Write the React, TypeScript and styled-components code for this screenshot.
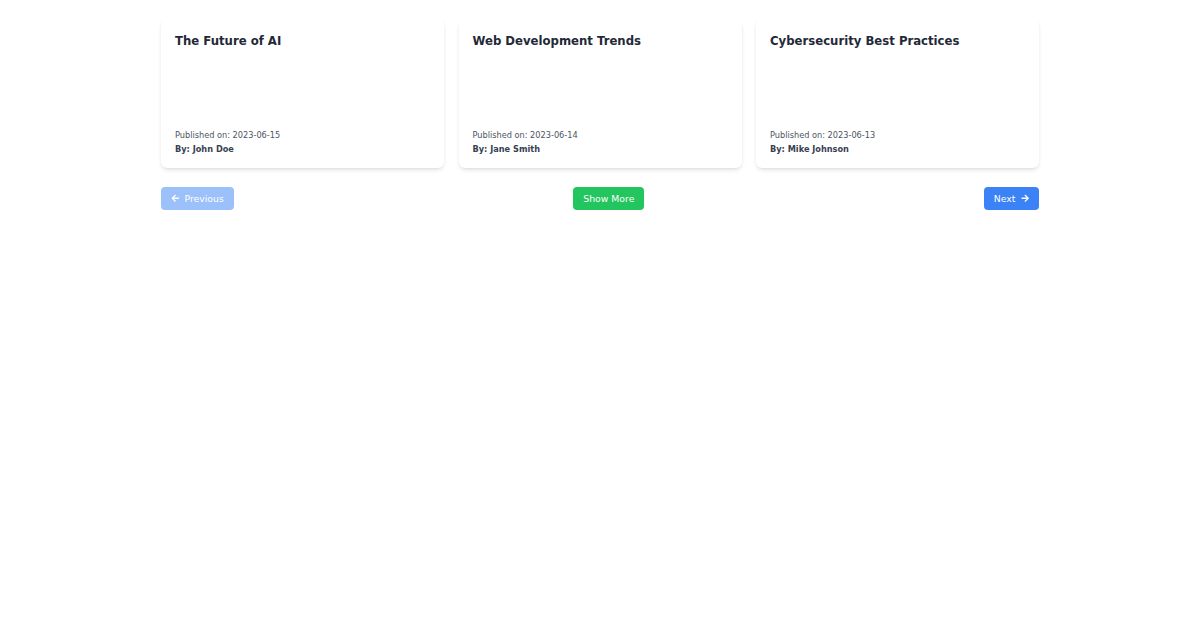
import styled, { createGlobalStyle } from "styled-components";
import { FaArrowLeft, FaArrowRight } from "react-icons/fa";

const GlobalStyle = createGlobalStyle`
  body {
    margin: 0;
    background: #ffffff;
    font-family: "DejaVu Sans", Verdana, sans-serif;
  }
`;

const Page = styled.div`
  max-width: 878px;
  margin: 0 auto;
  padding-top: 19px;
`;

const CardGrid = styled.div`
  display: grid;
  grid-template-columns: repeat(3, 1fr);
  gap: 14.5px;
`;

const Card = styled.article`
  display: flex;
  flex-direction: column;
  height: 149px;
  box-sizing: border-box;
  padding: 14px 14px 12px;
  background: #ffffff;
  border-radius: 6px;
  box-shadow: 0 3px 5px -1px rgba(0, 0, 0, 0.1), 0 1px 3px -1px rgba(0, 0, 0, 0.1);
`;

const Title = styled.h2`
  margin: 0;
  font-size: 11.7px;
  line-height: 17px;
  font-weight: bold;
  color: #1f2937;
`;

const Meta = styled.div`
  margin-top: auto;
  font-size: 8.2px;
  line-height: 14px;
`;

const Published = styled.p`
  margin: 0;
  color: #4b5563;
`;

const Author = styled.p`
  margin: 0;
  font-weight: bold;
  color: #374151;
`;

const Controls = styled.div`
  display: flex;
  justify-content: space-between;
  align-items: center;
  margin-top: 19px;
`;

const Button = styled.button<{ $color: string; $faded?: boolean }>`
  display: inline-flex;
  align-items: center;
  gap: 5px;
  height: 23px;
  padding: 0 10px;
  border: none;
  border-radius: 4px;
  background: ${(p) => p.$color};
  opacity: ${(p) => (p.$faded ? 0.5 : 1)};
  color: #ffffff;
  font-family: "DejaVu Sans", Verdana, sans-serif;
  font-size: 9.3px;
  line-height: 13px;
  cursor: ${(p) => (p.$faded ? "not-allowed" : "pointer")};

  svg {
    width: 8.5px;
    height: 8.5px;
  }
`;

const posts = [
  { title: "The Future of AI", date: "2023-06-15", author: "John Doe" },
  { title: "Web Development Trends", date: "2023-06-14", author: "Jane Smith" },
  { title: "Cybersecurity Best Practices", date: "2023-06-13", author: "Mike Johnson" },
];

function App() {
  return (
    <>
      <GlobalStyle />
      <Page>
        <CardGrid>
          {posts.map((post) => (
            <Card key={post.title}>
              <Title>{post.title}</Title>
              <Meta>
                <Published>Published on: {post.date}</Published>
                <Author>By: {post.author}</Author>
              </Meta>
            </Card>
          ))}
        </CardGrid>
        <Controls>
          <Button $color="#3b82f6" $faded disabled>
            <FaArrowLeft />
            Previous
          </Button>
          <Button $color="#22c55e">Show More</Button>
          <Button $color="#3b82f6">
            Next
            <FaArrowRight />
          </Button>
        </Controls>
      </Page>
    </>
  );
}

export default App;
